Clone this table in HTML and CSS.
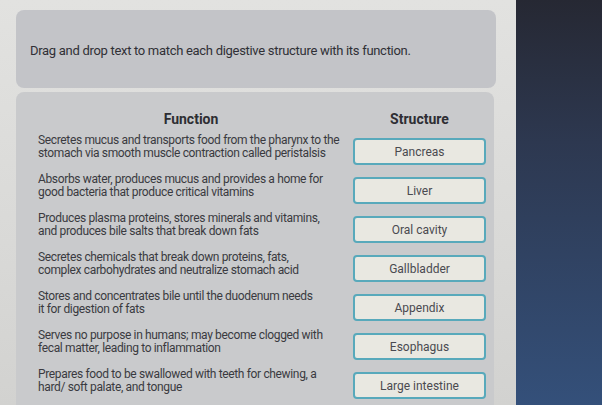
FILE: index.html
```html
<!DOCTYPE html>
<html>
<head>
<meta charset="utf-8">
<link rel="stylesheet" href="styles.css">
</head>
<body>
<div class="screen">
  <div class="card prompt">
    <p class="prompt-text">Drag and drop text to match each digestive structure with its function.</p>
  </div>
  <div class="card match">
    <div class="head">
      <div class="head-fn">Function</div>
      <div class="head-st">Structure</div>
    </div>
    <div class="row">
      <div class="fn">Secretes mucus and transports food from the pharynx to the<br>stomach via smooth muscle contraction called peristalsis</div>
      <div class="box">Pancreas</div>
    </div>
    <div class="row">
      <div class="fn">Absorbs water, produces mucus and provides a home for<br>good bacteria that produce critical vitamins</div>
      <div class="box">Liver</div>
    </div>
    <div class="row">
      <div class="fn">Produces plasma proteins, stores minerals and vitamins,<br>and produces bile salts that break down fats</div>
      <div class="box">Oral cavity</div>
    </div>
    <div class="row">
      <div class="fn">Secretes chemicals that break down proteins, fats,<br>complex carbohydrates and neutralize stomach acid</div>
      <div class="box">Gallbladder</div>
    </div>
    <div class="row">
      <div class="fn">Stores and concentrates bile until the duodenum needs<br>it for digestion of fats</div>
      <div class="box">Appendix</div>
    </div>
    <div class="row">
      <div class="fn">Serves no purpose in humans; may become clogged with<br>fecal matter, leading to inflammation</div>
      <div class="box">Esophagus</div>
    </div>
    <div class="row">
      <div class="fn">Prepares food to be swallowed with teeth for chewing, a<br>hard/ soft palate, and tongue</div>
      <div class="box">Large intestine</div>
    </div>
  </div>
</div>
<div class="bezel"></div>
</body>
</html>
```
FILE: styles.css
```css
html, body {
  margin: 0;
  height: 100%;
}
body {
  display: flex;
  overflow: hidden;
  font-family: Roboto, "Liberation Sans", sans-serif;
  color: #3c3c40;
}
.screen {
  width: 516px;
  flex: none;
  background: linear-gradient(180deg, #e2e2e0 0%, #d9d9d7 60%, #d2d2d0 100%);
  padding: 10px 20px 0 16px;
  box-sizing: border-box;
}
.bezel {
  flex: 1;
  background: linear-gradient(180deg, #262833 0%, #2d3850 35%, #34507a 100%);
}
.card {
  border-radius: 8px;
}
.prompt {
  height: 78px;
  background: #c3c4c8;
  display: flex;
  align-items: center;
  padding: 0 14px;
}
.prompt-text {
  margin: 0;
  font-size: 13px;
  letter-spacing: -0.3px;
  color: #303036;
  padding-top: 2px;
}
.match {
  margin-top: 4px;
  height: 330px;
  background: #c9cacc;
  border-radius: 8px 8px 0 0;
  padding: 18px 0 0 22px;
  width: 478px;
  box-sizing: border-box;
}
.head {
  display: grid;
  grid-template-columns: 306px 133px;
  column-gap: 9px;
  height: 18px;
  line-height: 18px;
  font-size: 14px;
  font-weight: 700;
  color: #2e2e33;
  margin-bottom: 6px;
}
.head-fn, .head-st {
  text-align: center;
}
.row {
  display: grid;
  grid-template-columns: 306px 133px;
  column-gap: 9px;
  height: 39px;
  align-items: start;
}
.fn {
  font-size: 12px;
  line-height: 13px;
  letter-spacing: -0.35px;
  white-space: nowrap;
  color: #3a3a3f;
}
.box {
  margin-top: 4px;
  height: 27px;
  box-sizing: border-box;
  border: 2px solid #58a9bb;
  border-radius: 4px;
  background: #e9e8e1;
  display: flex;
  align-items: center;
  justify-content: center;
  font-size: 12px;
  color: #4a4a50;
}
```
